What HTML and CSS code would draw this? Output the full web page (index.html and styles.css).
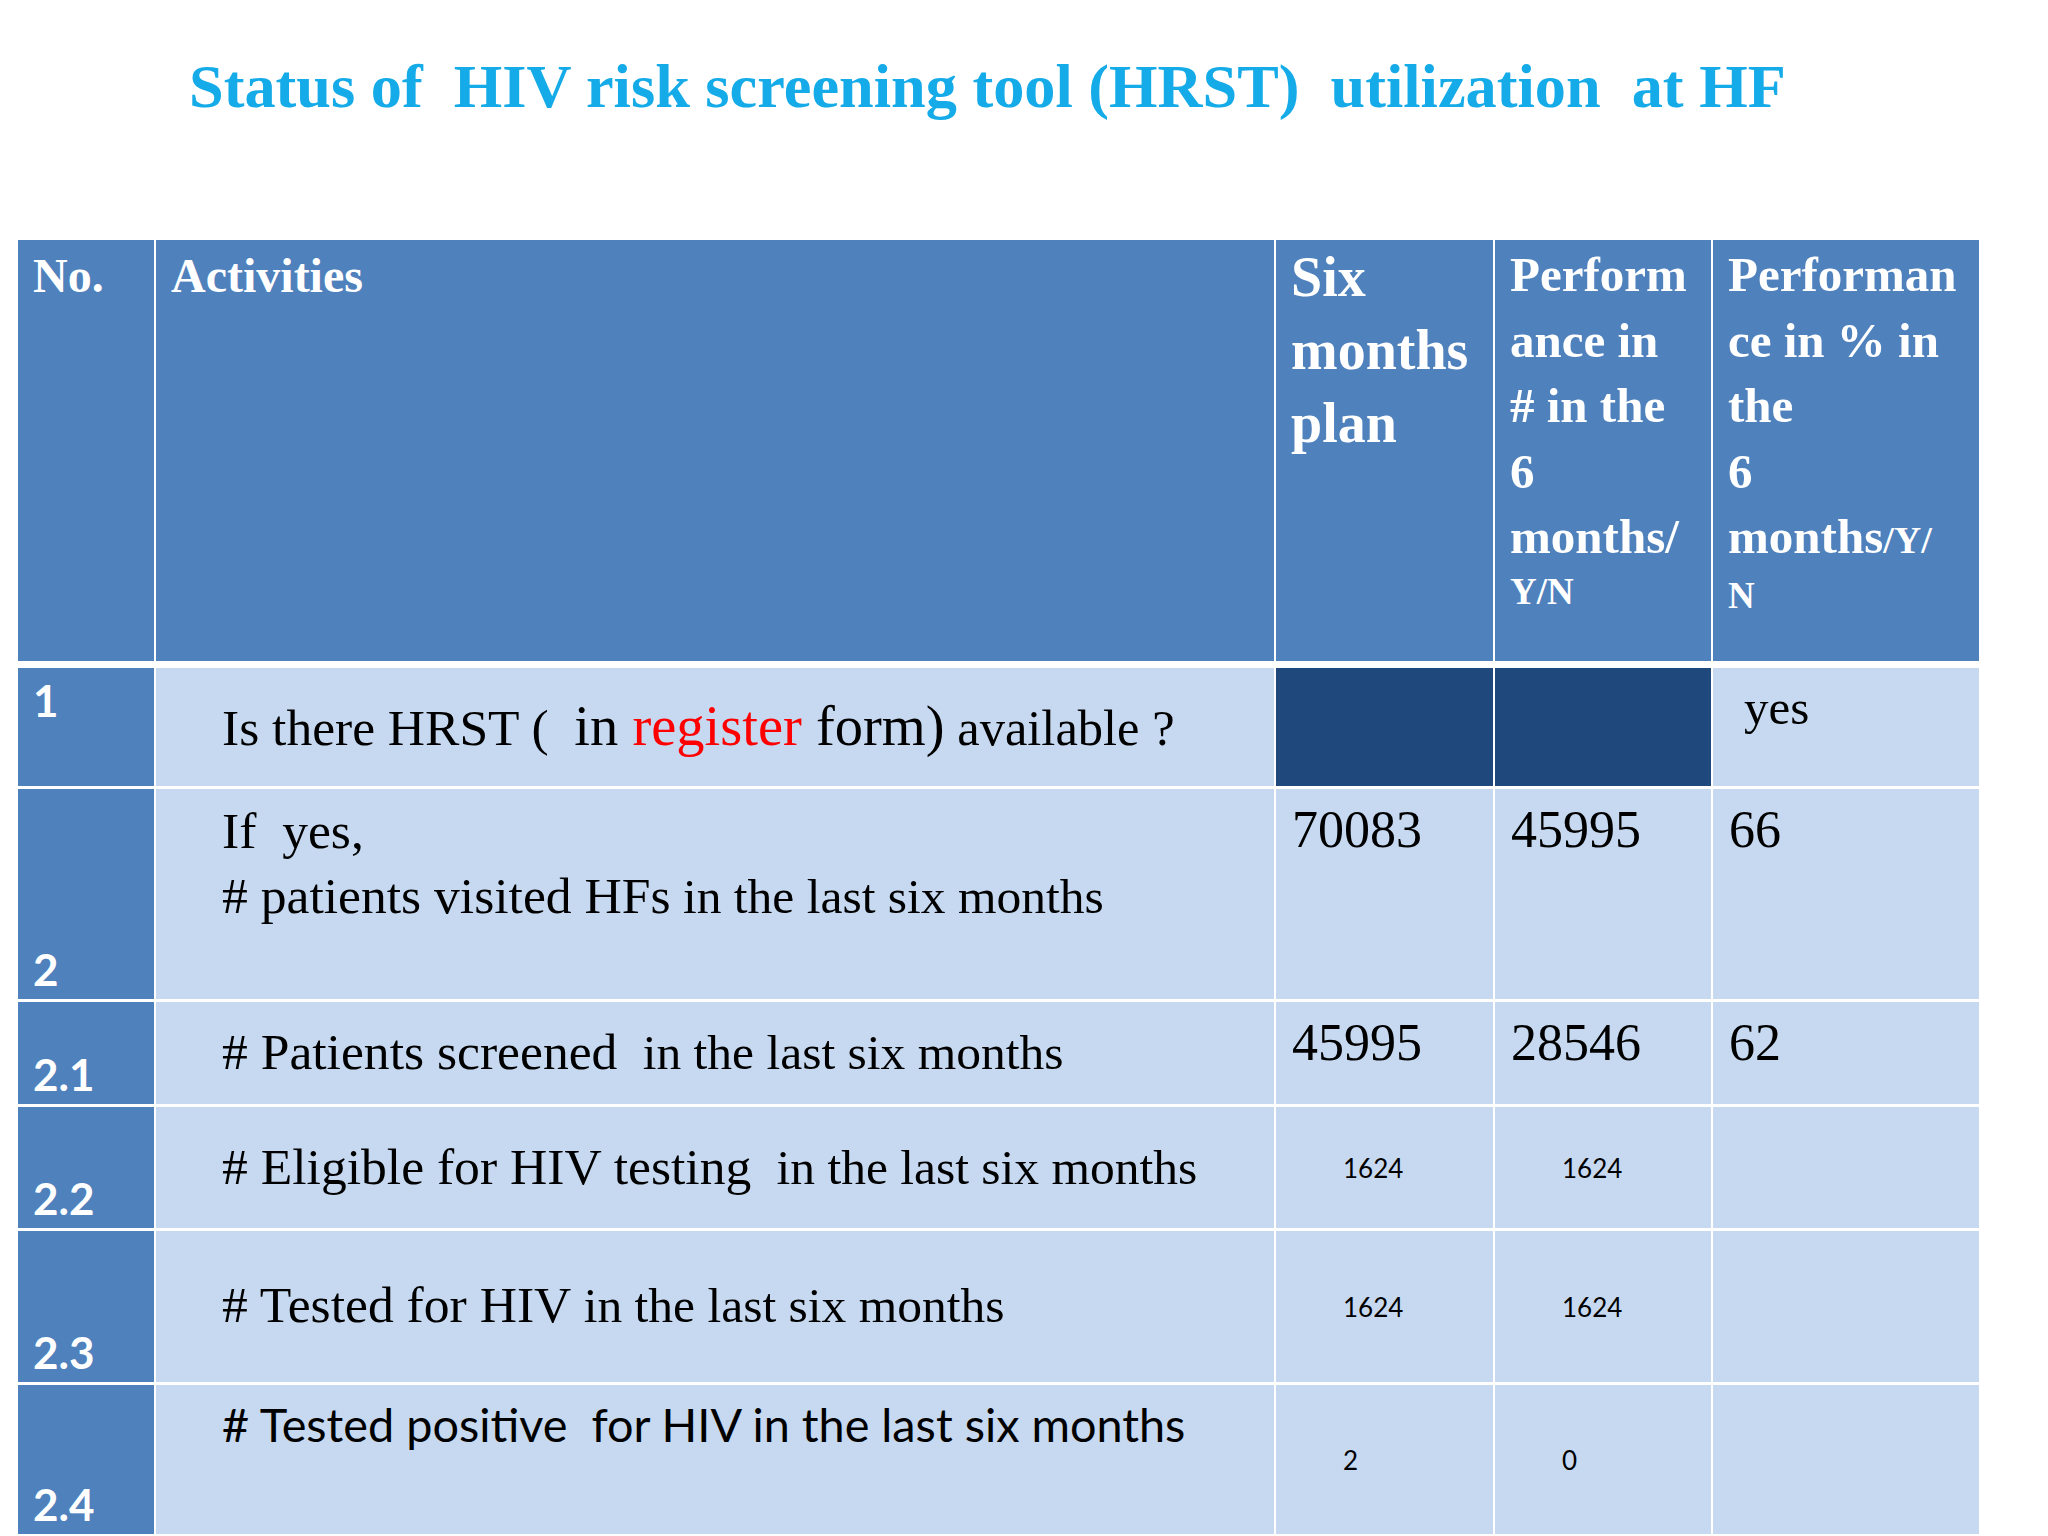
FILE: index.html
```html
<!DOCTYPE html>
<html lang="en">
<head>
<meta charset="utf-8">
<title>Status of HIV risk screening tool (HRST) utilization at HF</title>
<link rel="stylesheet" href="styles.css">
</head>
<body>
<div class="slide">
  <h1 class="title">Status of&nbsp; HIV risk screening tool (HRST)&nbsp; utilization&nbsp; at HF</h1>
  <div class="table">
    <div class="thead">
      <div class="th">No.</div>
      <div class="th">Activities</div>
      <div class="th th-plan">Six<br>months<br>plan</div>
      <div class="th th-perf">Perform<br>ance in<br># in the<br>6<br>months/<div class="yn">Y/N</div></div>
      <div class="th th-perf">Performan<br>ce in % in<br>the<br>6<br>months<span class="sm">/Y/</span><div class="yn">N</div></div>
    </div>
    <div class="tbody">
      <div class="num num-top">1</div>
      <div class="act act-r1"><span class="a51">Is there HRST (&nbsp; </span><span class="a56">in <span class="red">register</span> form)</span><span class="a50"> available ?</span></div>
      <div class="dark"></div>
      <div class="dark"></div>
      <div class="val val-yes">yes</div>

      <div class="num">2</div>
      <div class="act act-r2">If&nbsp; yes,<br># patients visited HFs<span class="small"> in the last six months</span></div>
      <div class="val">70083</div>
      <div class="val">45995</div>
      <div class="val">66</div>

      <div class="num">2.1</div>
      <div class="act act-r21"># Patients screened&nbsp;<span class="small"> in the last six months</span></div>
      <div class="val">45995</div>
      <div class="val">28546</div>
      <div class="val">62</div>

      <div class="num">2.2</div>
      <div class="act act-r22"># Eligible for HIV testing&nbsp;<span class="small"> in the last six months</span></div>
      <div class="mini">1624</div>
      <div class="mini">1624</div>
      <div class="blank"></div>

      <div class="num">2.3</div>
      <div class="act act-r23"># Tested for HIV<span class="small"> in the last six months</span></div>
      <div class="mini">1624</div>
      <div class="mini">1624</div>
      <div class="blank"></div>

      <div class="num">2.4</div>
      <div class="act act-r24 sans"># Tested positive&nbsp; for HIV in the last six months</div>
      <div class="mini">2</div>
      <div class="mini">0</div>
      <div class="blank"></div>
    </div>
  </div>
</div>
</body>
</html>
```
FILE: styles.css
```css
html, body {
  margin: 0;
  padding: 0;
  background: #ffffff;
}

.slide {
  width: 2048px;
  height: 1536px;
  box-sizing: border-box;
  padding: 46px 0 0 18px;
  overflow: hidden;
  font-family: "Liberation Serif", "Times New Roman", serif;
}

.title {
  margin: 0 0 114px 0;
  padding-left: 171px;
  height: 80px;
  font-size: 62.3px;
  line-height: 80px;
  font-weight: bold;
  color: #14abe8;
  white-space: nowrap;
}

.table {
  display: flex;
  flex-direction: column;
  gap: 7px;
  width: 1961px;
}

.thead,
.tbody {
  display: grid;
  grid-template-columns: 136px 1118px 217px 216px 266px;
  column-gap: 2px;
}

.thead {
  grid-template-rows: 421px;
}

.tbody {
  grid-template-rows: 118px 210px 102px 121px 151px 149px;
  row-gap: 3px;
}

.th {
  background: #4f81bd;
  color: #ffffff;
  font-weight: bold;
  font-size: 48px;
  line-height: 65px;
  padding: 3px 0 0 15px;
  white-space: nowrap;
}

.th-plan {
  font-size: 56px;
  line-height: 73px;
  padding-top: 1px;
}

.th-perf {
  font-size: 49px;
  line-height: 65.5px;
  padding-top: 2px;
}

.th .yn {
  font-size: 37px;
  line-height: 44px;
}

.th .sm {
  font-size: 38px;
}

.num {
  background: #4f81bd;
  color: #ffffff;
  font-family: Lato, "Liberation Sans", sans-serif;
  font-weight: bold;
  font-size: 44px;
  line-height: 53px;
  padding: 0 0 3px 15px;
  display: flex;
  align-items: flex-end;
}

.num-top {
  align-items: flex-start;
  padding-top: 6px;
}

.act,
.val,
.mini,
.blank,
.dark {
  background: #c6d9f0;
  color: #000000;
}

.dark {
  background: #1f497d;
}

.act {
  font-size: 51.6px;
  line-height: 65px;
  padding-left: 66px;
  white-space: nowrap;
}

.act .small {
  font-size: 49.5px;
}

.act .a51 { font-size: 51.5px; }
.act .a56 { font-size: 56.5px; }
.act .a50 { font-size: 50.5px; }
.act .red { color: #ff0000; }

.act-r1 { padding-top: 26px; }
.act-r2 { padding-top: 9px; }
.act-r21 { padding-top: 17px; }
.act-r22 { padding-top: 27px; }
.act-r23 { padding-top: 41px; }
.act-r24 { padding-top: 7px; }

.sans {
  font-family: Lato, "Liberation Sans", sans-serif;
  font-size: 46.8px;
}

.val {
  font-size: 52px;
  line-height: 65px;
  padding: 8px 0 0 16px;
}

.val-yes {
  font-size: 49px;
  padding: 7px 0 0 31px;
}

.mini {
  font-family: Lato, "Liberation Sans", sans-serif;
  font-size: 26px;
  display: flex;
  align-items: center;
  padding-left: 67px;
}
```
